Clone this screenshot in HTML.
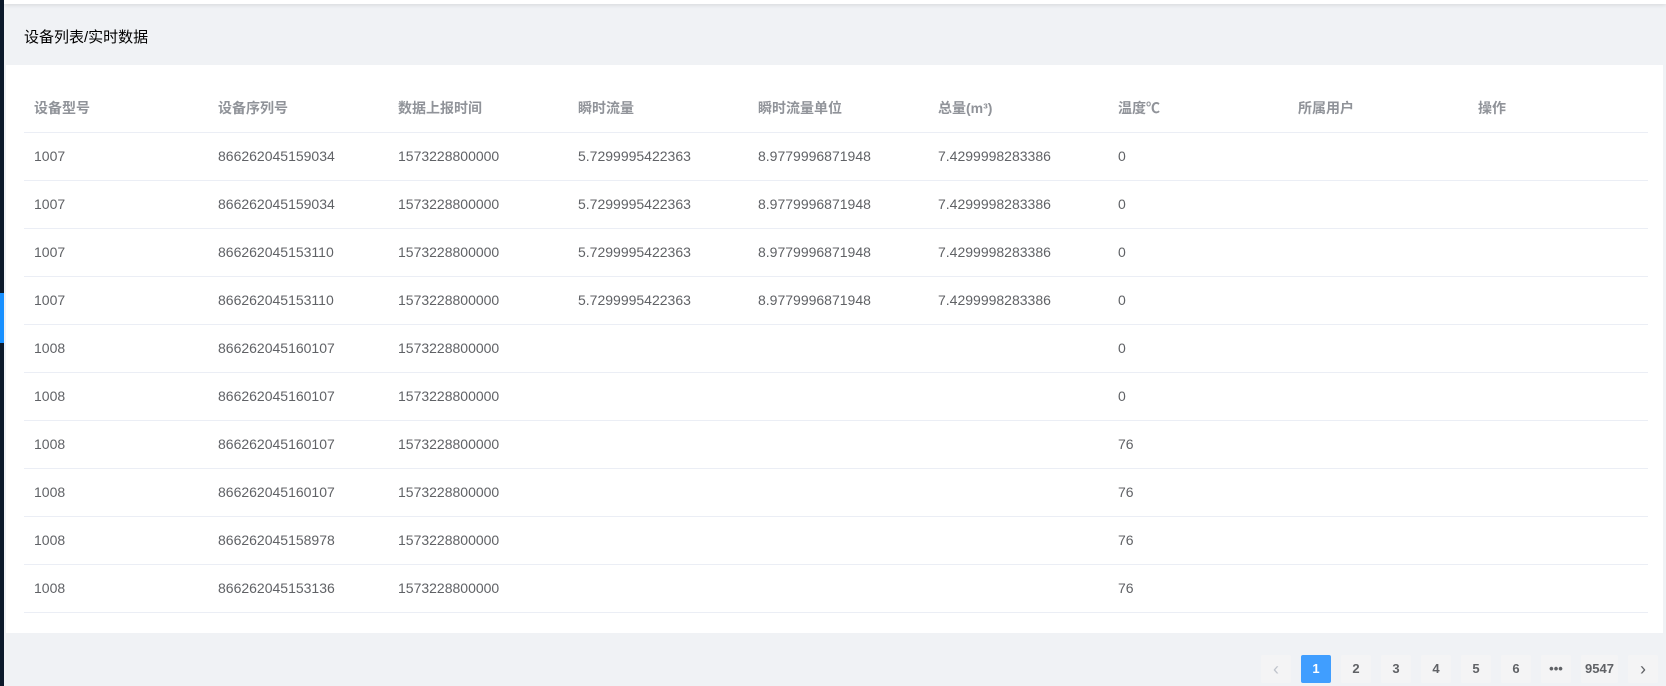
<!DOCTYPE html>
<html><head><meta charset="utf-8"><style>
*{margin:0;padding:0;box-sizing:border-box}
body{width:1666px;height:686px;background:#f0f2f5;font-family:"Liberation Sans","Noto Sans CJK SC",sans-serif;position:relative;overflow:hidden}
.side{position:absolute;left:0;top:0;width:4px;height:686px;background:#0c1a2b}
.side i{position:absolute;left:0;top:293px;width:4px;height:50px;background:#1890ff}
.top{position:absolute;left:4px;top:0;right:0;height:4px;background:#fff;box-shadow:0 1px 4px rgba(0,0,0,.12)}
.title{position:absolute;left:24px;top:26px;font-size:15px;color:#000}
.card{position:absolute;left:6px;top:65px;width:1657px;height:568px;background:#fff}
table{position:absolute;left:18px;top:19px;width:1624px;border-collapse:collapse;table-layout:fixed}
td,th{height:48px;padding:0 10px;text-align:left;font-size:14px;color:#606266;border-bottom:1px solid #ebeef5;font-weight:normal}
th{color:#909399;font-weight:bold}
.pg{position:absolute;top:655px;height:28px;width:30px;background:#f4f4f5;border-radius:2px;font-size:13px;font-weight:bold;color:#606266;text-align:center;line-height:28px}
.pg.a{background:#409eff;color:#fff}
</style></head><body>
<div class="side"><i></i></div>
<div class="top"></div>
<div class="title">设备列表/实时数据</div>
<div class="card"><table>
<colgroup><col style="width:184px"><col style="width:180px"><col style="width:180px"><col style="width:180px"><col style="width:180px"><col style="width:180px"><col style="width:180px"><col style="width:180px"><col style="width:180px"></colgroup>
<tr><th>设备型号</th><th>设备序列号</th><th>数据上报时间</th><th>瞬时流量</th><th>瞬时流量单位</th><th>总量(m³)</th><th>温度℃</th><th>所属用户</th><th>操作</th></tr>
<tr><td>1007</td><td>866262045159034</td><td>1573228800000</td><td>5.7299995422363</td><td>8.9779996871948</td><td>7.4299998283386</td><td>0</td><td></td><td></td></tr>
<tr><td>1007</td><td>866262045159034</td><td>1573228800000</td><td>5.7299995422363</td><td>8.9779996871948</td><td>7.4299998283386</td><td>0</td><td></td><td></td></tr>
<tr><td>1007</td><td>866262045153110</td><td>1573228800000</td><td>5.7299995422363</td><td>8.9779996871948</td><td>7.4299998283386</td><td>0</td><td></td><td></td></tr>
<tr><td>1007</td><td>866262045153110</td><td>1573228800000</td><td>5.7299995422363</td><td>8.9779996871948</td><td>7.4299998283386</td><td>0</td><td></td><td></td></tr>
<tr><td>1008</td><td>866262045160107</td><td>1573228800000</td><td></td><td></td><td></td><td>0</td><td></td><td></td></tr>
<tr><td>1008</td><td>866262045160107</td><td>1573228800000</td><td></td><td></td><td></td><td>0</td><td></td><td></td></tr>
<tr><td>1008</td><td>866262045160107</td><td>1573228800000</td><td></td><td></td><td></td><td>76</td><td></td><td></td></tr>
<tr><td>1008</td><td>866262045160107</td><td>1573228800000</td><td></td><td></td><td></td><td>76</td><td></td><td></td></tr>
<tr><td>1008</td><td>866262045158978</td><td>1573228800000</td><td></td><td></td><td></td><td>76</td><td></td><td></td></tr>
<tr><td>1008</td><td>866262045153136</td><td>1573228800000</td><td></td><td></td><td></td><td>76</td><td></td><td></td></tr>
</table></div>
<div class="pg" style="left:1261px;color:#c0c4cc;font-weight:normal;font-size:18px">&lsaquo;</div>
<div class="pg a" style="left:1301px">1</div>
<div class="pg" style="left:1341px">2</div>
<div class="pg" style="left:1381px">3</div>
<div class="pg" style="left:1421px">4</div>
<div class="pg" style="left:1461px">5</div>
<div class="pg" style="left:1501px">6</div>
<div class="pg" style="left:1541px">•••</div>
<div class="pg" style="left:1581px;width:37px">9547</div>
<div class="pg" style="left:1628px;font-weight:normal;font-size:18px">&rsaquo;</div>
</body></html>
